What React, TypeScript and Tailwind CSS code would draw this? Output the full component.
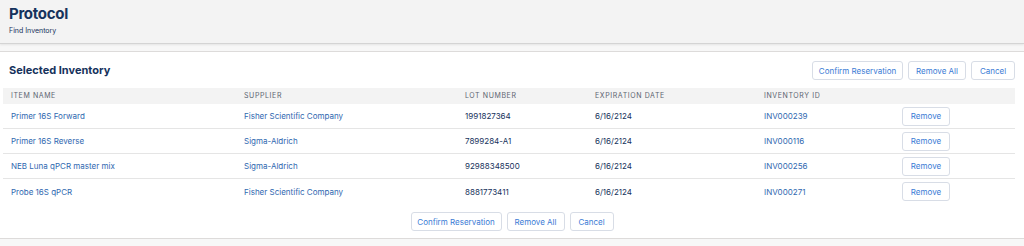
import React from 'react';

const rows = [
  { name: 'Primer 16S Forward', supplier: 'Fisher Scientific Company', lot: '1991827364', exp: '6/16/2124', id: 'INV000239' },
  { name: 'Primer 16S Reverse', supplier: 'Sigma-Aldrich', lot: '7899284-A1', exp: '6/16/2124', id: 'INV000116' },
  { name: 'NEB Luna qPCR master mix', supplier: 'Sigma-Aldrich', lot: '92988348500', exp: '6/16/2124', id: 'INV000256' },
  { name: 'Probe 16S qPCR', supplier: 'Fisher Scientific Company', lot: '8881773411', exp: '6/16/2124', id: 'INV000271' },
];

const cols = 'grid grid-cols-[233px_221px_130px_169px_138px_1fr]';

const Btn: React.FC<{ label: string; className?: string }> = ({ label, className = '' }) => (
  <button
    className={`h-[19px] rounded-[3px] border border-[#d8dde6] bg-white text-[8px] text-[#3a7bd5] ${className}`}
  >
    {label}
  </button>
);

const Actions: React.FC = () => (
  <div className="flex items-center gap-[5px]">
    <Btn label="Confirm Reservation" className="w-[91px]" />
    <Btn label="Remove All" className="w-[58px]" />
    <Btn label="Cancel" className="w-[44px]" />
  </div>
);

export default function App() {
  return (
    <div className="h-[246px] w-full overflow-hidden bg-[#f7f7f7] font-['Inter',sans-serif]">
      {/* Page header */}
      <div className="h-[44px] border-b border-[#d4d4d4] bg-[#f3f3f3] px-[9px] pt-[4px] shadow-[0_1px_2px_rgba(0,0,0,0.08)]">
        <h1 className="text-[15px] font-bold leading-[20px] tracking-[-0.3px] text-[#16325c]">Protocol</h1>
        <p className="mt-[2px] text-[7px] leading-[9px] text-[#16325c]">Find Inventory</p>
      </div>

      {/* Card */}
      <div className="mt-[7px] border-y border-[#dddbda] bg-white pt-[9px] pb-[7px]">
        <div className="flex items-center justify-between pl-[9px] pr-[9px]">
          <h2 className="text-[11px] font-bold text-[#16325c]">Selected Inventory</h2>
          <Actions />
        </div>

        <div className="ml-[3px] mt-[8px] w-[1012px]">
          <div className={`${cols} h-[16px] items-center bg-[#f3f3f3] text-[7px] uppercase tracking-[0.6px] text-[#5c6470]`}>
            <div className="pl-[8px]">Item Name</div>
            <div className="pl-[8px]">Supplier</div>
            <div className="pl-[8px]">Lot Number</div>
            <div className="pl-[8px]">Expiration Date</div>
            <div className="pl-[8px]">Inventory ID</div>
            <div />
          </div>
          {rows.map((r, i) => (
            <div
              key={r.id}
              className={`${cols} h-[25px] items-center text-[8px] ${i < rows.length - 1 ? 'border-b border-[#e5e5e5]' : ''}`}
            >
              <div className="pl-[8px] text-[#2f68b0]">{r.name}</div>
              <div className="pl-[8px] text-[#2f68b0]">{r.supplier}</div>
              <div className="pl-[8px] text-[#16325c]">{r.lot}</div>
              <div className="pl-[8px] text-[#16325c]">{r.exp}</div>
              <div className="pl-[8px] text-[#2f68b0]">{r.id}</div>
              <div className="pl-[8px]">
                <Btn label="Remove" className="w-[48px]" />
              </div>
            </div>
          ))}
        </div>

        <div className="mt-[8px] flex justify-center">
          <Actions />
        </div>
      </div>
    </div>
  );
}
